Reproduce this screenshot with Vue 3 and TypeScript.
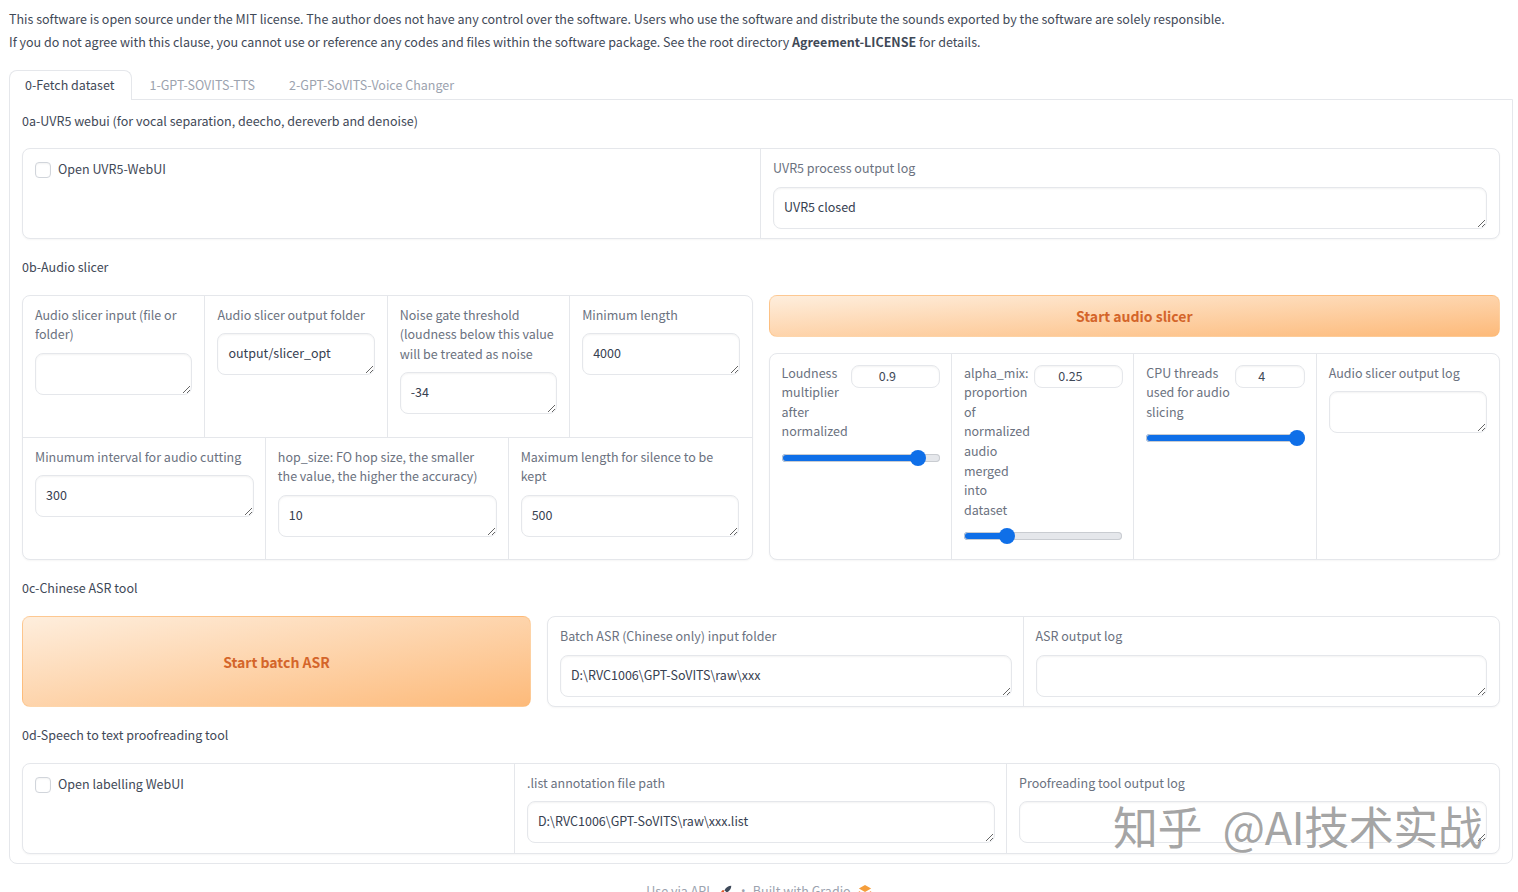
<script setup lang="ts">
interface Field { label: string; value: string }
interface Slider { label: string; value: string; num: number; max: number; labelWidth: number; inputWidth: number }

const slicerTop: Field[] = [
  { label: 'Audio slicer input (file or folder)', value: '' },
  { label: 'Audio slicer output folder', value: 'output/slicer_opt' },
  { label: 'Noise gate threshold (loudness below this value will be treated as noise', value: '-34' },
  { label: 'Minimum length', value: '4000' },
]
const slicerBottom: Field[] = [
  { label: 'Minumum interval for audio cutting', value: '300' },
  { label: 'hop_size: FO hop size, the smaller the value, the higher the accuracy)', value: '10' },
  { label: 'Maximum length for silence to be kept', value: '500' },
]
const sliders: Slider[] = [
  { label: 'Loudness multiplier after normalized', value: '0.9', num: 0.9, max: 1, labelWidth: 64, inputWidth: 89 },
  { label: 'alpha_mix: proportion of normalized audio merged into dataset', value: '0.25', num: 0.25, max: 1, labelWidth: 66, inputWidth: 89 },
  { label: 'CPU threads used for audio slicing', value: '4', num: 4, max: 4, labelWidth: 84, inputWidth: 70 },
]
const asrFields: Field[] = [
  { label: 'Batch ASR (Chinese only) input folder', value: 'D:\\RVC1006\\GPT-SoVITS\\raw\\xxx' },
  { label: 'ASR output log', value: '' },
]
const proofFields: Field[] = [
  { label: '.list annotation file path', value: 'D:\\RVC1006\\GPT-SoVITS\\raw\\xxx.list' },
  { label: 'Proofreading tool output log', value: '' },
]
const uvrLog = 'UVR5 closed'
function fill(s: Slider): string {
  return `${8 + 141 * (s.num / s.max)}px`
}
</script>

<template>
  <div class="page">
    <div class="notice">
      <p>This software is open source under the MIT license. The author does not have any control over the software. Users who use the software and distribute the sounds exported by the software are solely responsible.</p>
      <p>If you do not agree with this clause, you cannot use or reference any codes and files within the software package. See the root directory <strong>Agreement-LICENSE</strong> for details.</p>
    </div>

    <div class="tabs">
      <button class="tab active">0-Fetch dataset</button>
      <button class="tab">1-GPT-SOVITS-TTS</button>
      <button class="tab">2-GPT-SoVITS-Voice Changer</button>
    </div>

    <div class="panel">
      <div class="heading">0a-UVR5 webui (for vocal separation, deecho, dereverb and denoise)</div>
      <div class="group row">
        <label class="cell check-cell">
          <input type="checkbox" class="check" />
          <span>Open UVR5-WebUI</span>
        </label>
        <div class="cell">
          <div class="label">UVR5 process output log</div>
          <textarea class="box" readonly rows="1" :value="uvrLog"></textarea>
        </div>
      </div>

      <div class="heading">0b-Audio slicer</div>
      <div class="split slicer">
        <div class="group stack">
          <div class="row grow four">
            <div v-for="f in slicerTop" :key="f.label" class="cell">
              <div class="label">{{ f.label }}</div>
              <textarea class="box" readonly rows="1" :value="f.value"></textarea>
            </div>
          </div>
          <div class="row grow divided">
            <div v-for="f in slicerBottom" :key="f.label" class="cell">
              <div class="label tight">{{ f.label }}</div>
              <textarea class="box" readonly rows="1" :value="f.value"></textarea>
            </div>
          </div>
        </div>
        <div class="stack gap">
          <button class="primary short">Start audio slicer</button>
          <div class="group row grow">
            <div v-for="s in sliders" :key="s.label" class="cell slider-cell">
              <div class="slider-head">
                <div class="label" :style="{ width: s.labelWidth + 'px' }">{{ s.label }}</div>
                <input class="num" type="number" readonly :value="s.value" :style="{ width: s.inputWidth + 'px' }" />
              </div>
              <input class="range" type="range" min="0" :max="s.max" step="0.01" :value="s.num" :style="{ '--fill': fill(s) }" />
            </div>
            <div class="cell">
              <div class="label">Audio slicer output log</div>
              <textarea class="box" readonly rows="1"></textarea>
            </div>
          </div>
        </div>
      </div>

      <div class="heading">0c-Chinese ASR tool</div>
      <div class="split asr">
        <button class="primary">Start batch ASR</button>
        <div class="group row">
          <div v-for="f in asrFields" :key="f.label" class="cell">
            <div class="label">{{ f.label }}</div>
            <textarea class="box" readonly rows="1" :value="f.value"></textarea>
          </div>
        </div>
      </div>

      <div class="heading">0d-Speech to text proofreading tool</div>
      <div class="group row">
        <label class="cell check-cell">
          <input type="checkbox" class="check" />
          <span>Open labelling WebUI</span>
        </label>
        <div v-for="f in proofFields" :key="f.label" class="cell">
          <div class="label">{{ f.label }}</div>
          <textarea class="box" readonly rows="1" :value="f.value"></textarea>
        </div>
      </div>
    </div>

    <div class="footer">
      <span>Use via API</span>
      <svg class="ficon rocket" viewBox="0 0 16 16" aria-hidden="true">
        <path d="M15 1c-4 0-7 2-9 6l3 3c4-2 6-5 6-9z" fill="#3f4a5a" />
        <path d="M6 7H3L1 10h4zM9 10v3l-3 2v-4z" fill="#e0562b" />
      </svg>
      <span class="dot">·</span>
      <span>Built with Gradio</span>
      <svg class="ficon" viewBox="0 0 16 16" aria-hidden="true">
        <path d="M8 1l7 4-7 4-7-4z" fill="#f59e3b" />
        <path d="M1 8l7 4 7-4v2l-7 4-7-4z" fill="#fb923c" />
      </svg>
    </div>

    <div class="watermark">知乎 @AI技术实战</div>
  </div>
</template>

<style scoped>
.page {
  position: relative;
  box-sizing: border-box;
  height: 892px;
  overflow: hidden;
  padding: 7px 5px 0 9px;
  font-family: "Noto Sans CJK SC", "Noto Sans", sans-serif;
  font-size: 12.5px;
  color: #3f4957;
}
.notice {
  line-height: 23px;
  margin-bottom: 17px;
}
.notice p {
  margin: 0;
}
.notice strong {
  font-weight: 600;
}
.tabs {
  display: flex;
  height: 29px;
}
.tab {
  box-sizing: border-box;
  height: 30px;
  padding: 0 16px 2px;
  border: 1px solid transparent;
  border-bottom: none;
  border-radius: 8px 8px 0 0;
  background: none;
  font: inherit;
  color: #9ca3af;
  position: relative;
  z-index: 1;
}
.tab.active {
  padding-left: 15px;
  padding-right: 17px;
  border-color: #e5e7eb;
  background: #fff;
  color: #3f4957;
}
.panel {
  box-sizing: border-box;
  height: 765px;
  display: flex;
  flex-direction: column;
  gap: 18px;
  padding: 10.5px 12px 10px;
  border: 1px solid #e5e7eb;
  border-radius: 0 0 8px 8px;
}
.heading {
  line-height: 19.6px;
}
.group {
  box-sizing: border-box;
  min-width: 0;
  border: 1px solid #e5e7eb;
  border-radius: 8px;
  background: #fff;
  box-shadow: 0 1px 2px rgba(0, 0, 0, 0.04);
}
.row {
  display: flex;
}
.stack {
  display: flex;
  flex-direction: column;
  min-width: 0;
}
.grow {
  flex: 1 1 auto;
}
.gap {
  gap: 16px;
}
.divided {
  border-top: 1px solid #e5e7eb;
}
.split {
  display: grid;
  gap: 16px;
}
.slicer {
  grid-template-columns: 730.5px minmax(0, 1fr);
}
.asr {
  grid-template-columns: minmax(0, 509fr) minmax(0, 953fr);
}
.cell {
  box-sizing: border-box;
  flex: 1 1 0;
  min-width: 0;
  padding: 10px 12px 9.4px;
  border-left: 1px solid #e5e7eb;
}
.cell + .cell {
  margin-left: -1px;
}
.four .cell + .cell {
  margin-left: 0;
}
.cell:first-child {
  border-left: none;
}
.label {
  line-height: 19.6px;
  margin: -1px 0 9px;
  color: #6b7280;
}
.tight {
  padding-right: 2px;
}
.box {
  display: block;
  box-sizing: border-box;
  width: 100%;
  height: 42px;
  padding: 9px 10px 11px;
  border: 1px solid #e5e7eb;
  border-radius: 8px;
  background: #fff;
  box-shadow: inset 0 1px 2px rgba(0, 0, 0, 0.05);
  font: inherit;
  line-height: 20px;
  color: #374151;
  resize: vertical;
  outline: none;
}
.check-cell {
  display: flex;
  align-items: flex-start;
  gap: 7px;
  line-height: 19.6px;
  color: #3f4957;
}
.check {
  appearance: none;
  box-sizing: border-box;
  flex: none;
  width: 16px;
  height: 16px;
  margin: 3px 0 0;
  border: 1px solid #d1d5db;
  border-radius: 4px;
  background: #fff;
  box-shadow: inset 0 1px 2px rgba(0, 0, 0, 0.05);
}
.primary {
  padding: 0;
  border: 1px solid rgba(253, 186, 116, 0.45);
  border-radius: 8px;
  background: linear-gradient(to bottom right, #feeedd, #fdba7a);
  font: inherit;
  font-size: 14px;
  font-weight: 600;
  color: #d4652a;
}
.short {
  height: 42px;
  flex: none;
}
.slider-cell {
  padding-bottom: 13px;
}
.slider-head {
  display: flex;
  justify-content: space-between;
  align-items: flex-start;
  gap: 4px;
}
.slider-head .label {
  margin-bottom: 0;
  flex: none;
}
.num {
  box-sizing: border-box;
  flex: none;
  height: 23px;
  margin-top: 1px;
  padding: 0 16px 2px 0;
  border: 1px solid #e5e7eb;
  border-radius: 8px;
  background: #fff;
  box-shadow: inset 0 1px 2px rgba(0, 0, 0, 0.05);
  font: inherit;
  text-align: center;
  color: #3f4957;
  outline: none;
  appearance: textfield;
}
.num::-webkit-inner-spin-button,
.num::-webkit-outer-spin-button {
  appearance: none;
  margin: 0;
}
.range {
  appearance: none;
  display: block;
  width: 100%;
  height: 20px;
  margin: 7px 0 0;
  background: none;
}
.range::-webkit-slider-runnable-track {
  height: 8px;
  border-radius: 4px;
  box-shadow: inset 0 0 0 1px #c9ccd1;
  background: linear-gradient(to right, #0f6fe8 var(--fill), #e5e7eb var(--fill));
}
.range::-webkit-slider-thumb {
  appearance: none;
  width: 16px;
  height: 16px;
  margin-top: -4px;
  border-radius: 50%;
  background: #0f6fe8;
}
.footer {
  display: flex;
  justify-content: center;
  align-items: center;
  gap: 7px;
  margin: 17px 4px 0 0;
  line-height: 20px;
  color: #9ca3af;
}
.dot {
  display: flex;
  justify-content: center;
  width: 3px;
  margin-right: 1px;
}
.ficon {
  width: 14px;
  height: 14px;
  flex: none;
}
.rocket {
  width: 12px;
  margin: 0 3px;
}
.watermark {
  position: absolute;
  left: 1113px;
  top: 794px;
  font-size: 45px;
  line-height: 64px;
  letter-spacing: -0.5px;
  word-spacing: 11px;
  white-space: pre;
  color: rgba(130, 130, 130, 0.72);
  text-shadow: 1px 1px 0 rgba(255, 255, 255, 0.6);
  pointer-events: none;
}
</style>

<style>
html, body {
  margin: 0;
  background: #fff;
  overflow: hidden;
}
</style>
